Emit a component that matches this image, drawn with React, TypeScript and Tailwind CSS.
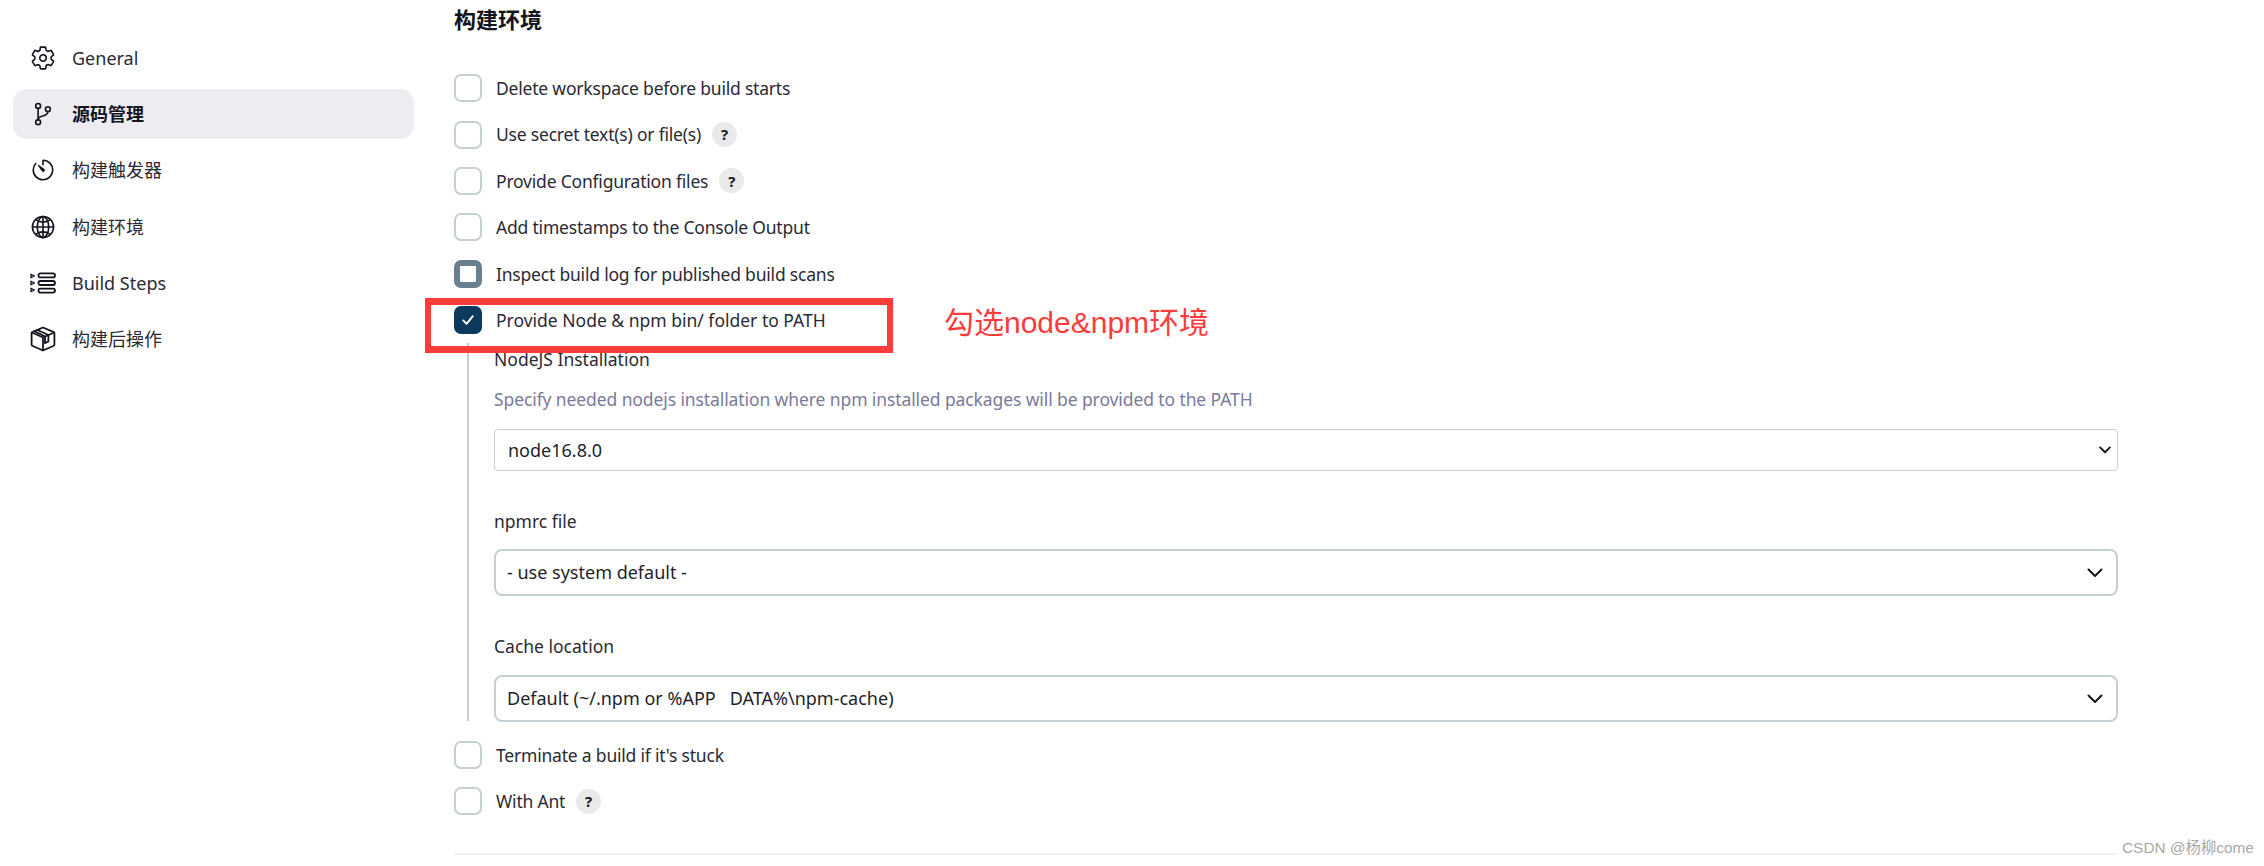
import { IoSettingsOutline, IoGitBranchOutline, IoTimerOutline, IoGlobeOutline } from 'react-icons/io5';
import { ReactNode } from 'react';

function StepsIcon() {
  return (
    <svg viewBox="0 0 26 22" className="w-[26px] h-[22px]" fill="none" stroke="currentColor" strokeWidth="1.8">
      <path d="M1 2.2l3.4 1.8L1 5.8zM1 9.2l3.4 1.8L1 12.8zM1 16.2l3.4 1.8L1 19.8z" strokeWidth="1.3" strokeLinejoin="round" />
      <rect x="8.4" y="1.4" width="16.6" height="4" rx="2" />
      <rect x="8.4" y="9" width="16.6" height="4" rx="2" />
      <rect x="8.4" y="16.6" width="16.6" height="4" rx="2" />
    </svg>
  );
}

function BoxIcon() {
  return (
    <svg viewBox="0 0 26 26" className="w-[26px] h-[26px]" fill="none" stroke="currentColor" strokeWidth="1.8" strokeLinejoin="round">
      <path d="M13 1.5l10.8 4.6a1 1 0 0 1 .6.9v11.8a1 1 0 0 1-.6.9L13 24.5 2.2 19.700a1 1 0 0 1-.6-.9V7a1 1 0 0 1 .6-.9z" />
      <path d="M1.800 6.500L13 11.500l11.200-5M13 11.500v13" />
      <path d="M7.400 4l11 5v6.500l-3.400 1.600V10.500L4.600 5.400" />
    </svg>
  );
}

const navItems: { label: string; icon: ReactNode; active?: boolean }[] = [
  { label: 'General', icon: <IoSettingsOutline className="w-[26px] h-[26px]" /> },
  { label: '源码管理', icon: <IoGitBranchOutline className="w-[26px] h-[26px]" />, active: true },
  { label: '构建触发器', icon: <IoTimerOutline className="w-[26px] h-[26px]" /> },
  { label: '构建环境', icon: <IoGlobeOutline className="w-[26px] h-[26px]" /> },
  { label: 'Build Steps', icon: <StepsIcon /> },
  { label: '构建后操作', icon: <BoxIcon /> },
];

function Sidebar() {
  return (
    <aside className="w-[454px] shrink-0 pt-[33px] pl-[13px]">
      <nav className="w-[401px] flex flex-col gap-[6.200px]">
        {navItems.map((item) => (
          <div
            key={item.label}
            className={
              item.active
                ? 'h-[50px] flex items-center gap-[16px] pl-[17px] rounded-[14px] bg-[#edecf1] font-bold text-[#14141f]'
                : 'h-[50px] flex items-center gap-[16px] pl-[17px] text-[#2a2a35]'
            }
          >
            <span className="w-[26px] flex justify-center text-[#14141f]">{item.icon}</span>
            <span className="text-[18px] leading-none">{item.label}</span>
          </div>
        ))}
      </nav>
    </aside>
  );
}

function Check({ label, help, hover }: { label: string; help?: boolean; hover?: boolean }) {
  return (
    <div className="h-[46.400px] flex items-center">
      <span
        className={
          hover
            ? 'w-[28px] h-[28px] rounded-[7px] bg-white border-[6px] border-[#68808f] shrink-0'
            : 'w-[28px] h-[28px] rounded-[7px] bg-white border-2 border-[#c5d0d5] shrink-0'
        }
      />
      <span className="ml-[14px] text-[17.500px] tracking-[-0.2px] text-[#2a2a35]">{label}</span>
      {help && (
        <span className="ml-[11px] w-[25px] h-[25px] rounded-full bg-[#e9e9eb] text-[#1a1a24] text-[15px] font-bold flex items-center justify-center">
          ?
        </span>
      )}
    </div>
  );
}

function Chevron({ small }: { small?: boolean }) {
  return (
    <svg
      viewBox="0 0 16 10"
      className={small ? 'w-[12px] h-[8px]' : 'w-[16px] h-[10px]'}
      fill="none"
      stroke="#14141f"
      strokeWidth={small ? 2.4 : 2}
      strokeLinecap="round"
      strokeLinejoin="round"
    >
      <path d="M1.500 1.500L8 8l6.500-6.500" />
    </svg>
  );
}

function Select({ value, thin }: { value: string; thin?: boolean }) {
  return (
    <div
      className={
        thin
          ? 'h-[42px] flex items-center justify-between pl-[13px] pr-[6px] border border-[#c5d0d5] rounded-[4px] bg-white'
          : 'h-[47px] flex items-center justify-between pl-[11px] pr-[13px] border-2 border-[#c5d0d5] rounded-[8px] bg-white'
      }
    >
      <span className="text-[18px] text-[#1f1f2a] whitespace-pre">{value}</span>
      <Chevron small={thin} />
    </div>
  );
}

export default function App() {
  return (
    <div className="relative w-[2264px] h-[866px] overflow-hidden bg-white flex font-['Noto_Sans','Noto_Sans_CJK_SC',sans-serif]">
      <Sidebar />

      <main className="w-[1664px] shrink-0">
        <h2 className="h-[65px] pt-[4px] text-[22px] leading-[30px] font-bold text-[#14141f]">构建环境</h2>

        <Check label="Delete workspace before build starts" />
        <Check label="Use secret text(s) or file(s)" help />
        <Check label="Provide Configuration files" help />
        <Check label="Add timestamps to the Console Output" />
        <Check label="Inspect build log for published build scans" hover />

        <div className="h-[46.400px] flex items-center">
          <span className="w-[28px] h-[28px] rounded-[7px] bg-[#0b3a5e] flex items-center justify-center shrink-0">
            <svg viewBox="0 0 16 16" className="w-[14px] h-[14px]" fill="none" stroke="white" strokeWidth="2.200" strokeLinecap="round" strokeLinejoin="round">
              <path d="M2.500 8.500l3.800 3.800 7.200-8.600" />
            </svg>
          </span>
          <span className="ml-[14px] text-[17.500px] text-[#2a2a35]">Provide Node &amp; npm bin/ folder to PATH</span>
        </div>

        <div className="ml-[13px] w-[1651px] h-[378px] border-l-2 border-[#c5d0d5] pl-[25px]">
          <p className="pt-[2px] text-[17.500px] leading-[28px] text-[#2a2a35]">NodeJS Installation</p>
          <p className="mt-[12px] text-[17.500px] tracking-[-0.1px] leading-[28px] text-[#7a7a9a]">
            Specify needed nodejs installation where npm installed packages will be provided to the PATH
          </p>
          <div className="mt-[16px]">
            <Select value="node16.8.0" thin />
          </div>
          <p className="mt-[36px] text-[17.500px] leading-[28px] text-[#2a2a35]">npmrc file</p>
          <div className="mt-[14px]">
            <Select value="- use system default -" />
          </div>
          <p className="mt-[36px] text-[17.500px] leading-[28px] text-[#2a2a35]">Cache location</p>
          <div className="mt-[15px]">
            <Select value="Default (~/.npm or %APP   DATA%\npm-cache)" />
          </div>
        </div>

        <div className="mt-[10.500px]">
          <Check label="Terminate a build if it's stuck" />
          <Check label="With Ant" help />
        </div>

        <div className="mt-[28px] h-[2px] bg-[#f1f1f4]" />
      </main>

      {/* annotation drawn over the screenshot */}
      <div className="absolute left-[425px] top-[298px] w-[468px] h-[55px] border-x-[6px] border-y-[7px] border-[#ff3b3b]" />
      <span className="absolute left-[944px] top-[303px] text-[30px] leading-[40px] text-[#ff3b3b] font-['Liberation_Sans','Noto_Sans_CJK_SC',sans-serif]">勾选node&amp;npm环境</span>
      <span className="absolute left-[2122px] top-[837px] text-[15.400px] leading-[22px] text-[#a8a8a8] font-['Liberation_Sans','Noto_Sans_CJK_SC',sans-serif]">CSDN @杨柳come</span>
    </div>
  );
}
